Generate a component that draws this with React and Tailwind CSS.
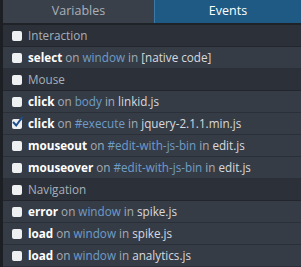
import React from 'react';

const ROWS = [
  { group: 'Interaction' },
  { name: 'select', target: 'window', file: '[native code]' },
  { group: 'Mouse' },
  { name: 'click', target: 'body', file: 'linkid.js' },
  { name: 'click', target: '#execute', file: 'jquery-2.1.1.min.js', checked: true },
  { name: 'mouseout', target: '#edit-with-js-bin', file: 'edit.js' },
  { name: 'mouseover', target: '#edit-with-js-bin', file: 'edit.js' },
  { group: 'Navigation' },
  { name: 'error', target: 'window', file: 'spike.js' },
  { name: 'load', target: 'window', file: 'spike.js' },
  { name: 'load', target: 'window', file: 'analytics.js' },
];

function Checkbox({ checked }) {
  return (
    <span className="relative w-[10px] h-[10px] rounded-[2px] bg-[#eef0f2] shrink-0">
      {checked && (
        <svg className="absolute left-[-1px] top-[-3px]" width="13" height="13" viewBox="0 0 13 13">
          <path d="M2.5 6.5 L5.2 9.5 L11 1.5" fill="none" stroke="#1f4f8f" strokeWidth="2" strokeLinecap="round" />
        </svg>
      )}
    </span>
  );
}

function Row({ row }) {
  if (row.group) {
    return (
      <div className="flex items-center h-[22.4px] pl-[9px] gap-[6px] bg-[#2c3139] border-b border-[#23272d]">
        <Checkbox />
        <span className="text-[#a7b0ba]">{row.group}</span>
      </div>
    );
  }
  return (
    <div className="flex items-center h-[22.4px] pl-[9px] gap-[6px] bg-[#363c46] border-b border-[#2b3038] whitespace-nowrap">
      <Checkbox checked={row.checked} />
      <span>
        <span className="font-bold text-white">{row.name}</span>
        <span className="text-[#a3abb5]"> on </span>
        <span className="text-[#6f9cc8]">{row.target}</span>
        <span className="text-[#a3abb5]"> in </span>
        <span className="text-[#d6dadf]">{row.file}</span>
      </span>
    </div>
  );
}

export default function App() {
  return (
    <div className="w-[301px] h-[267px] overflow-hidden bg-[#2c3139] flex font-['Open_Sans',sans-serif] text-[11.7px]">
      <div className="w-[3px] bg-[#1c1f24] shrink-0" />
      <div className="flex-1 flex flex-col">
        <div className="flex h-[25px] shrink-0 border-b-2 border-[#1f2328]">
          <div className="w-[151px] flex items-center justify-center bg-[#3a404a] text-[#a9b1bb] text-[12.5px]">Variables</div>
          <div className="flex-1 flex items-center justify-center bg-[#1e5a84] border-l border-[#3b7aa6] text-white text-[12.5px]">Events</div>
        </div>
        {ROWS.map((r, i) => (
          <Row key={i} row={r} />
        ))}
      </div>
    </div>
  );
}
